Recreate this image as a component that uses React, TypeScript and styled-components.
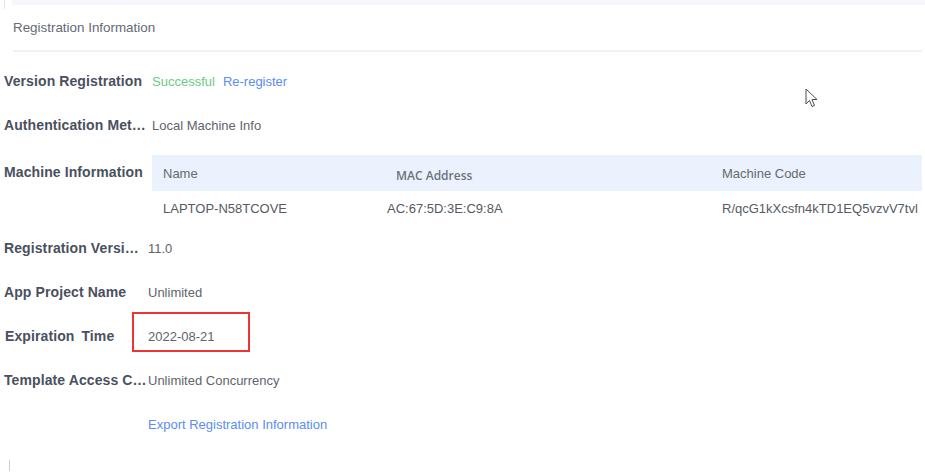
import React from 'react';
import styled, {createGlobalStyle} from 'styled-components';

const GlobalStyle = createGlobalStyle`
  html, body {
    margin: 0;
    padding: 0;
    background: #FFFFFF;
  }

  body {
    font-family: "Liberation Sans", Arial, sans-serif;
    font-size: 13px;
  }
`;

const Page = styled.div`
  position: relative;
  width: 925px;
  height: 474px;
  overflow: hidden;
`;

const TopStrip = styled.div`
  height: 5px;
  margin-left: 12px;
  background: #F6F7FB;
`;

const EdgeMark = styled.div`
  position: absolute;
  left: 4px;
  top: 0;
  width: 1px;
  height: 9px;
  background: #E3E4E8;
`;

const Header = styled.div`
  margin: 0 3px 0 13px;
  height: 45px;
  line-height: 46px;
  border-bottom: 2px solid #F0F1F3;
  color: #666A73;
  font-size: 13.4px;
`;

const Rows = styled.div`
  padding: 7px 0 0 4px;
`;

const Row = styled.div<{ $height?: number }>`
  display: flex;
  align-items: center;
  height: ${p => p.$height ?? 44}px;
`;

const Label = styled.div<{ $width: number; $spacing?: number; $indent?: number }>`
  width: ${p => p.$width}px;
  flex-shrink: 0;
  box-sizing: border-box;
  padding-left: ${p => p.$indent ?? 0}px;
  font-weight: 700;
  font-size: 14px;
  letter-spacing: 0.1px;
  color: #4A505E;
  white-space: nowrap;
  overflow: hidden;
  text-overflow: ellipsis;
  word-spacing: ${p => p.$spacing ?? 0}px;
`;

const Value = styled.div<{ $offset?: number }>`
  position: relative;
  margin-left: ${p => p.$offset ?? 0}px;
  color: #60646C;
  font-size: 13px;
  display: flex;
  gap: 8px;
`;

const Success = styled.span`
  color: #6CCB82;
`;

const Link = styled.span`
  color: #5B8DEF;
  cursor: pointer;
`;

const Highlight = styled.div`
  position: absolute;
  left: -16px;
  top: -17px;
  width: 114px;
  height: 36px;
  border: 2px solid #EE3434;
`;

const MachineBlock = styled.div`
  display: flex;
  align-items: flex-start;
  margin-top: 8px;
`;

const MachineLabel = styled(Label)`
  line-height: 34px;
`;

const Table = styled.div`
  width: 770px;
  overflow: hidden;
`;

const TableRow = styled.div<{ $head?: boolean }>`
  display: grid;
  grid-template-columns: 233px 326px 1fr;
  height: ${p => (p.$head ? 36 : 35)}px;
  align-items: center;
  background: ${p => (p.$head ? '#EBF2FD' : 'transparent')};
  color: ${p => (p.$head ? '#666A73' : '#555A63')};
`;

const Cell = styled.div<{ $indent?: number; $alt?: boolean }>`
  padding-left: ${p => 11 + (p.$indent ?? 0)}px;
  white-space: nowrap;
  overflow: hidden;
  font-family: ${p => (p.$alt ? '"Open Sans", sans-serif' : 'inherit')};
  font-weight: ${p => (p.$alt ? 600 : 400)};
  font-size: ${p => (p.$alt ? 12 : 13)}px;
  color: ${p => (p.$alt ? '#6E727A' : 'inherit')};
  padding-top: ${p => (p.$alt ? 4 : 0)}px;
`;

const Cursor = styled.svg`
  position: absolute;
  left: 805px;
  top: 88px;
`;

const FootMark = styled.div`
  position: absolute;
  left: 9px;
  top: 460px;
  width: 1px;
  height: 11px;
  background: #CFCFCF;
`;

export default function App() {
    return (
        <Page>
            <GlobalStyle/>
            <EdgeMark/>
            <TopStrip/>
            <Header>Registration Information</Header>
            <Rows>
                <Row>
                    <Label $width={148}>Version Registration</Label>
                    <Value>
                        <Success>Successful</Success>
                        <Link>Re-register</Link>
                    </Value>
                </Row>
                <Row>
                    <Label $width={146}>Authentication Method</Label>
                    <Value $offset={2}>Local Machine Info</Value>
                </Row>
                <MachineBlock>
                    <MachineLabel $width={148}>Machine Information</MachineLabel>
                    <Table>
                        <TableRow $head>
                            <Cell>Name</Cell>
                            <Cell $alt>MAC Address</Cell>
                            <Cell>Machine Code</Cell>
                        </TableRow>
                        <TableRow>
                            <Cell>LAPTOP-N58TCOVE</Cell>
                            <Cell $indent={-9}>AC:67:5D:3E:C9:8A</Cell>
                            <Cell>R/qcG1kXcsfn4kTD1EQ5vzvV7tvl</Cell>
                        </TableRow>
                    </Table>
                </MachineBlock>
                <Row>
                    <Label $width={137}>Registration Version</Label>
                    <Value $offset={7}>11.0</Value>
                </Row>
                <Row>
                    <Label $width={144}>App Project Name</Label>
                    <Value>Unlimited</Value>
                </Row>
                <Row>
                    <Label $width={144} $spacing={3} $indent={1}>Expiration Time</Label>
                    <Value>
                        2022-08-21
                        <Highlight/>
                    </Value>
                </Row>
                <Row>
                    <Label $width={144}>Template Access Concurrency</Label>
                    <Value>Unlimited Concurrency</Value>
                </Row>
                <Row>
                    <Label $width={144}/>
                    <Value><Link>Export Registration Information</Link></Value>
                </Row>
            </Rows>
            <Cursor width="14" height="21" viewBox="0 0 14 21">
                <path d="M1 1 L1 16 L4.5 12.5 L7 18.5 L9.5 17.5 L7 11.5 L12 11.5 Z"
                      fill="#FFFFFF" stroke="#4A4A4A" strokeWidth="1" strokeLinejoin="round"/>
            </Cursor>
            <FootMark/>
        </Page>
    );
}
